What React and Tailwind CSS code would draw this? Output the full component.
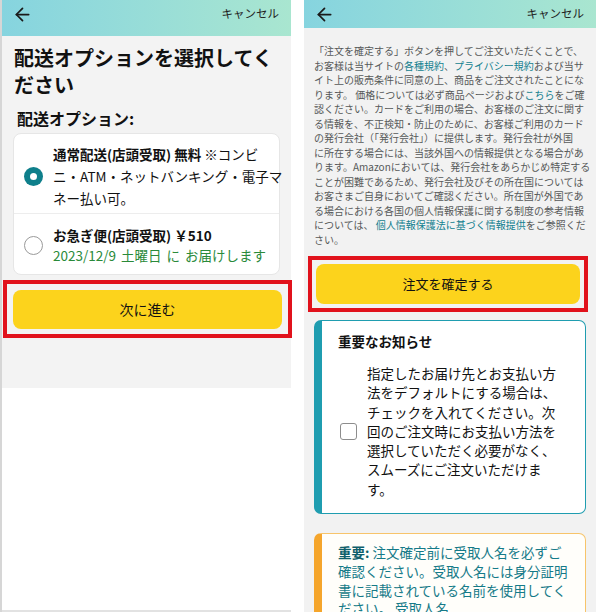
import React from 'react';
import { ArrowLeft } from 'lucide-react';

const font = { fontFamily: '"Noto Sans CJK JP", "Noto Sans", sans-serif' };

function Header() {
  return (
    <div className="h-[36px] bg-gradient-to-r from-[#86d4df] to-[#a9e6d0]">
      <div className="h-[28px] flex items-center justify-between pl-[10px] pr-[12px]">
        <ArrowLeft size={21} strokeWidth={2} className="text-[#1a1a1a]" />
        <span className="text-[11.5px] text-[#222]">キャンセル</span>
      </div>
    </div>
  );
}

export default function App() {
  return (
    <div style={font} className="w-[596px] h-[612px] overflow-hidden bg-white flex">
      {/* Left screen */}
      <div className="w-[291px] shrink-0 border-l-2 border-[#d6d6d6] flex flex-col">
        <Header />
        <div className="h-[352px] bg-[#f3f3f3] px-[11px] pt-[8px]">
          <h1 className="text-[20px] font-bold leading-[27px] text-[#111] pl-[1px]">
            配送オプションを選択してく<br />ださい
          </h1>
          <h2 className="mt-[10px] pl-[4px] text-[16px] font-bold leading-[20px] text-[#111]">配送オプション:</h2>

          <div className="mt-[5px] bg-white rounded-[8px] border border-[#e6e6e6]">
            <div className="flex items-center pl-[10px] pt-[9px] pb-[4px]">
              <span className="w-[19px] h-[19px] rounded-full bg-[#0e7f8b] flex items-center justify-center shrink-0">
                <span className="w-[7px] h-[7px] rounded-full bg-white" />
              </span>
              <p className="ml-[10px] text-[13.5px] leading-[22px] text-[#111] whitespace-nowrap">
                <span className="font-bold">通常配送(店頭受取) 無料</span> ※コンビ<br />
                ニ・ATM・ネットバンキング・電子マ<br />
                ネー払い可。
              </p>
            </div>
            <div className="border-t border-[#ededed]" />
            <div className="flex items-center pl-[10px] pt-[11px] pb-[9px]">
              <span className="w-[19px] h-[19px] rounded-full border border-[#9a9a9a] bg-white shrink-0" />
              <p className="ml-[10px] text-[13.5px] leading-[20px] whitespace-nowrap">
                <span className="font-bold text-[#111]">お急ぎ便(店頭受取) ￥510</span><br />
                <span className="text-[#2a8a3a]">
                  2023/12/9<span className="ml-[5px]">土曜日</span><span className="ml-[5px]">に</span><span className="ml-[5px]">お届けします</span>
                </span>
              </p>
            </div>
          </div>

          <div className="mt-[5px] -ml-[10px] -mr-[12px] border-4 border-[#e1121c] px-[6px] pt-[6px] pb-[5px]">
            <button className="w-full h-[39px] rounded-[8px] bg-[#fcd31c] text-[14px] text-[#111]">次に進む</button>
          </div>
        </div>
        <div className="flex-1 bg-white border-b-2 border-[#e2e2e2]" />
      </div>

      <div className="w-[13px] shrink-0" />

      {/* Right screen */}
      <div className="w-[292px] shrink-0 flex flex-col">
        <Header />
        <div className="flex-1 bg-[#f2f2f2] px-[10px] pt-[16px]">
          <p className="text-[10px] leading-[14.5px] text-[#565959] whitespace-nowrap">
            「注文を確定する」ボタンを押してご注文いただくことで、<br />
            お客様は当サイトの<span className="text-[#127f8f]">各種規約</span>、<span className="text-[#127f8f]">プライバシー規約</span>および当サ<br />
            イト上の販売条件に同意の上、商品をご注文されたことにな<br />
            ります。 価格については必ず商品ページおよび<span className="text-[#127f8f]">こちら</span>をご確<br />
            認ください。カードをご利用の場合、お客様のご注文に関す<br />
            る情報を、不正検知・防止のために、お客様ご利用のカード<br />
            の発行会社（「発行会社」）に提供します。発行会社が外国<br />
            に所在する場合には、当該外国への情報提供となる場合があ<br />
            ります。Amazonにおいては、発行会社をあらかじめ特定する<br />
            ことが困難であるため、発行会社及びその所在国については<br />
            お客さまご自身においてご確認ください。所在国が外国であ<br />
            る場合における各国の個人情報保護に関する制度の参考情報<br />
            については、 <span className="text-[#127f8f]">個人情報保護法に基づく情報提供</span>をご参照くだ<br />
            さい。
          </p>

          <div className="mt-[9px] -ml-[6px] -mr-[2px] border-4 border-[#e1121c] px-[4px] py-[4px]">
            <button className="w-full h-[40px] rounded-[8px] bg-[#fcd31c] text-[13px] text-[#111]">注文を確定する</button>
          </div>

          <div className="mt-[8px] bg-white rounded-[7px] border-[1.5px] border-l-[8px] border-[#1f9db0] pl-[16px] pr-[10px] pt-[10px] pb-[14px]">
            <h3 className="text-[13.5px] font-bold leading-[20px] text-[#111]">重要なお知らせ</h3>
            <div className="mt-[13px] flex items-center">
              <span className="w-[17px] h-[17px] rounded-[3px] border border-[#8d8d8d] bg-white shrink-0 ml-[2px]" />
              <p className="ml-[10px] text-[13.5px] leading-[19.3px] text-[#111] whitespace-nowrap">
                指定したお届け先とお支払い方<br />
                法をデフォルトにする場合は、<br />
                チェックを入れてください。次<br />
                回のご注文時にお支払い方法を<br />
                選択していただく必要がなく、<br />
                スムーズにご注文いただけま<br />
                す。
              </p>
            </div>
          </div>

          <div className="mt-[19px] bg-[#fffefa] rounded-[7px] border-[1.5px] border-l-[8px] border-[#f7c46a] border-l-[#f5a52b] pl-[16px] pr-[8px] pt-[9px] pb-[10px]">
            <p className="text-[13.5px] leading-[18.8px] text-[#157a88] whitespace-nowrap">
              <span className="font-bold text-[#0f5f6b]">重要:</span> 注文確定前に受取人名を必ずご<br />
              確認ください。受取人名には身分証明<br />
              書に記載されている名前を使用してく<br />
              ださい。 受取人名
            </p>
          </div>
        </div>
      </div>
    </div>
  );
}
